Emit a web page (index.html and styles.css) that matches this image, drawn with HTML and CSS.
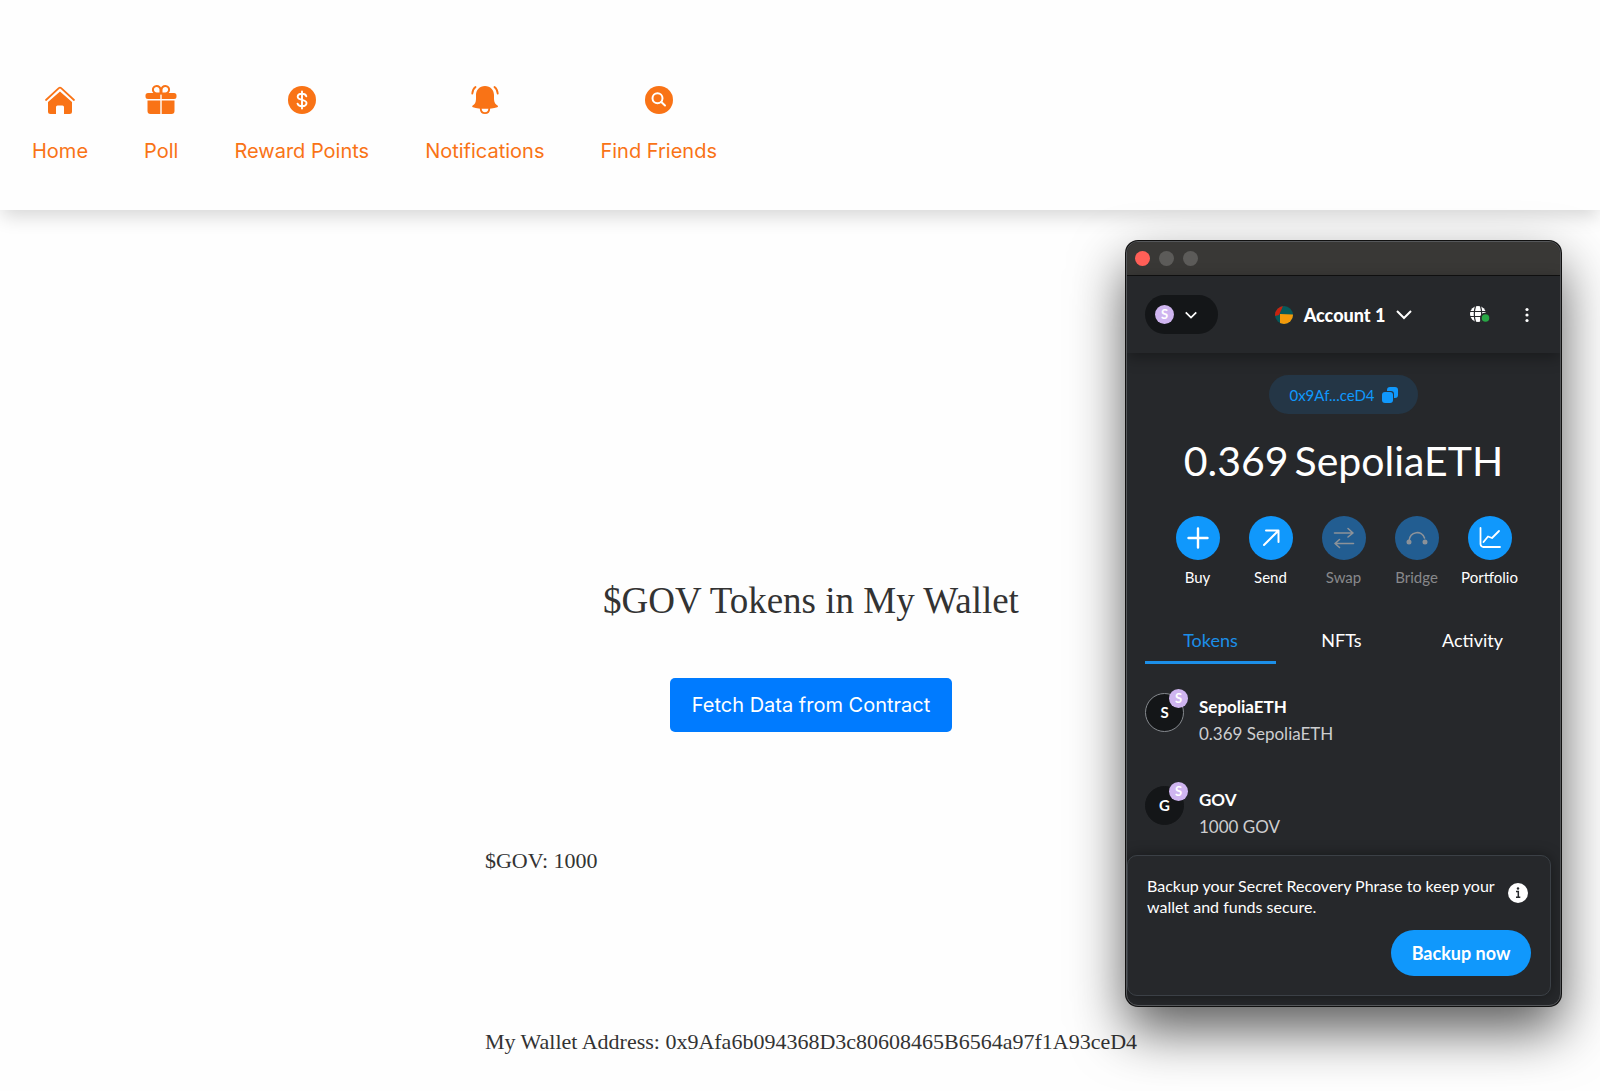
FILE: index.html
```html
<!DOCTYPE html>
<html lang="en">

<head>
    <meta charset="UTF-8">
    <meta name="viewport" content="width=device-width, initial-scale=1.0">
    <title>My Wallet</title>

    <link rel="stylesheet" href="styles.css">
</head>

<body>
    <header class="site-header">
        <nav class="nav">
            <a href="#home">
                <svg viewBox="0 0 32 32" fill="none" stroke="currentColor">
                    <path d="M2 16 14.800 4.200a1.800 1.800 0 0 1 2.400 0L30 16" stroke-width="1.800" stroke-linecap="round" />
                    <path d="M16 7.500 28 18v9.500a2.500 2.500 0 0 1-2.500 2.500H20v-7a1.500 1.500 0 0 0-1.500-1.500h-5A1.500 1.500 0 0 0 12 23v7H6.500A2.500 2.500 0 0 1 4 27.500V18z" fill="currentColor" stroke="none" />
                </svg>
                <span>Home</span>
            </a>
            <a href="#poll">
                <svg viewBox="0 0 32 32" fill="currentColor">
                    <g fill="none" stroke="currentColor" stroke-width="2">
                        <path d="M15.500 9.500H12a3.800 3.800 0 1 1 3.500-3.800z" />
                        <path d="M16.500 9.500H20a3.800 3.800 0 1 0-3.500-3.800z" />
                    </g>
                    <path d="M3 9h12.300v6H3a2.500 2.500 0 0 1-2.500-2.500v-1A2.500 2.500 0 0 1 3 9zM16.700 9H29a2.500 2.500 0 0 1 2.500 2.500v1A2.500 2.500 0 0 1 29 15H16.700zM2.500 16.500h12.800V30H5.500a3 3 0 0 1-3-3zM16.700 16.500h12.800V27a3 3 0 0 1-3 3h-9.800z" />
                </svg>
                <span>Poll</span>
            </a>
            <a href="#rewards">
                <svg viewBox="0 0 32 32" fill="none" stroke="#fff" stroke-width="1.900" stroke-linecap="round">
                    <circle cx="16" cy="16" r="14" fill="#f97316" stroke="none" />
                    <path d="M20.300 12.300c-.5-1.700-2.200-2.500-4.300-2.500-2.500 0-4.300 1.100-4.300 3 0 4.200 8.800 2 8.800 6.300 0 2-1.900 3.200-4.500 3.200-2.300 0-4-.9-4.500-2.700M16 7.500v17" />
                </svg>
                <span>Reward Points</span>
            </a>
            <a href="#notifications">
                <svg viewBox="0 0 32 32" fill="currentColor">
                    <path d="M16 2c5.500 0 9 4 9 9v4c0 3.500 1.500 5.500 3.500 6.500.8.500.6 1.500-.3 1.800C21 25.300 11 25.300 4 23.300c-.9-.3-1.100-1.300-.3-1.800C5.700 20.500 7 18.500 7 15v-4c0-5 3.500-9 9-9z" />
                    <path d="M11.700 24.500c.3 6.200 8.300 6.200 8.600 0M6.500 3C4.500 4.500 3.500 7 3.300 9.500M25.500 3c2 1.500 3 4 3.200 6.500" fill="none" stroke="currentColor" stroke-width="1.900" stroke-linecap="round" />
                </svg>
                <span>Notifications</span>
            </a>
            <a href="#friends">
                <svg viewBox="0 0 32 32" fill="none" stroke="#fff" stroke-width="2" stroke-linecap="round">
                    <circle cx="16" cy="16" r="14" fill="#f97316" stroke="none" />
                    <circle cx="14.500" cy="14.300" r="5" />
                    <path d="m18.300 18 3.700 3.500" />
                </svg>
                <span>Find Friends</span>
            </a>
        </nav>
    </header>

    <main class="container">
        <h1>$GOV Tokens in My Wallet</h1>
        <button type="button" class="fetch-btn">Fetch Data from Contract</button>
        <div class="results">
            <p>$GOV: 1000</p>
            <p>My Wallet Address: 0x9Afa6b094368D3c80608465B6564a97f1A93ceD4</p>
        </div>
    </main>

    <section class="wallet" aria-label="Wallet">
        <div class="titlebar">
            <span class="dot dot-close"></span>
            <span class="dot"></span>
            <span class="dot"></span>
        </div>

        <div class="wallet-header">
            <button type="button" class="network" aria-label="Network">
                <span class="net-badge">S</span>
                <svg class="chevron" viewBox="0 0 16 16"><path d="m2 5 6 6 6-6" /></svg>
            </button>
            <button type="button" class="account">
                <svg class="jazzicon" viewBox="0 0 18 18">
                    <defs><clipPath id="round"><circle cx="9" cy="9" r="9" /></clipPath></defs>
                    <g clip-path="url(#round)">
                        <path d="M0 0h18v18H0z" fill="#07595a" />
                        <path d="M0 0h8L4 9 0 10z" fill="#c8220f" />
                        <path d="m5 8 13 .5V18H5z" fill="#f39a0b" />
                    </g>
                </svg>
                Account 1
                <svg class="chevron" viewBox="0 0 16 16"><path d="m1 4 7 7 7-7" /></svg>
            </button>
            <div class="header-icons">
                <button type="button" aria-label="Connected sites">
                    <svg class="globe" viewBox="0 0 20 18">
                        <circle cx="8" cy="8" r="8" fill="#fff" />
                        <path d="M0 5.500h16M0 10.500h16M5.500 0C4 5 4 11 5.500 16M10.500 0c1.500 5 1.500 11 0 16" fill="none" stroke="#26282b" stroke-width="1.200" />
                        <circle cx="15.500" cy="12" r="5.500" fill="#26282b" />
                        <circle cx="15.500" cy="12" r="3.800" fill="#28a745" />
                    </svg>
                </button>
                <button type="button" aria-label="Account options">
                    <svg class="kebab" viewBox="0 0 4 16" fill="#fff">
                        <circle cx="2" cy="2.500" r="1.600" />
                        <circle cx="2" cy="8" r="1.600" />
                        <circle cx="2" cy="13.500" r="1.600" />
                    </svg>
                </button>
            </div>
        </div>

        <div class="wallet-body">
            <button type="button" class="address">
                0x9Af...ceD4
                <svg viewBox="0 0 16 16" fill="#1098fc">
                    <path d="M8 0h5a3 3 0 0 1 3 3v5a3 3 0 0 1-3 3h-1V7a3 3 0 0 0-3-3H5V3a3 3 0 0 1 3-3z" />
                    <rect y="5" width="11" height="11" rx="3" />
                </svg>
            </button>

            <div class="balance">
                <span>0.369</span>
                <span>SepoliaETH</span>
            </div>

            <div class="actions">
                <button type="button">
                    <svg viewBox="0 0 44 44"><path d="M22 12.500v19M12.500 22h19" stroke-width="2.400" /></svg>
                    Buy
                </button>
                <button type="button">
                    <svg viewBox="0 0 44 44"><path d="m15 29 14-14M17 14.500h12.500V26" /></svg>
                    Send
                </button>
                <button type="button" disabled>
                    <svg viewBox="0 0 44 44"><path d="M12.500 17H31m-5-4.500 5 4.500-5 4M31.500 27.500H13m4.500-4-4.500 4 4.500 4" stroke-width="1.600" /></svg>
                    Swap
                </button>
                <button type="button" disabled>
                    <svg viewBox="0 0 44 44">
                        <path d="M14 25c1-10 13-11 15.500-3" stroke-width="1.600" />
                        <circle cx="14" cy="26" r="1.500" />
                        <circle cx="30" cy="26" r="1.500" />
                    </svg>
                    Bridge
                </button>
                <button type="button">
                    <svg viewBox="0 0 44 44"><path d="M12.500 12v16a3 3 0 0 0 3 3H32M15.500 26l4.500-5.500 4 1.500 7-7" stroke-width="1.800" /></svg>
                    Portfolio
                </button>
            </div>

            <div class="tabs">
                <button type="button" class="active">Tokens</button>
                <button type="button">NFTs</button>
                <button type="button">Activity</button>
            </div>

            <ul class="tokens">
                <li>
                    <div class="avatar outlined">S<span class="net-badge">S</span></div>
                    <div>
                        <p class="token-name">SepoliaETH</p>
                        <p class="token-amount">0.369 SepoliaETH</p>
                    </div>
                </li>
                <li>
                    <div class="avatar">G<span class="net-badge">S</span></div>
                    <div>
                        <p class="token-name">GOV</p>
                        <p class="token-amount">1000 GOV</p>
                    </div>
                </li>
            </ul>
        </div>

        <div class="backup">
            <div class="backup-text">
                <p>Backup your Secret Recovery Phrase to keep your wallet and funds secure.</p>
                <svg viewBox="0 0 20 20">
                    <circle cx="10" cy="10" r="10" fill="#fff" />
                    <path d="M8 8.500h2.300V14M8 14.200h4.300" fill="none" stroke="#26282b" stroke-width="1.500" />
                    <circle cx="10" cy="5.500" r="1.200" fill="#26282b" />
                </svg>
            </div>
            <button type="button" class="backup-btn">Backup now</button>
        </div>
    </section>
</body>

</html>
```

FILE: styles.css
```css
* {
    box-sizing: border-box;
}

body {
    margin: 0;
    min-height: 100vh;
    background-color: #fefefe;
    color: #333;
    font-family: "Liberation Serif", "Times New Roman", serif;
    overflow-x: hidden;
}

h1,
p,
ul {
    margin: 0;
    padding: 0;
}

button {
    padding: 0;
    border: none;
    background: none;
    color: inherit;
    font: inherit;
    cursor: pointer;
}

/* top navigation */
.site-header {
    padding: 84px 32px 45px;
    background-color: #fefefe;
    box-shadow: 0 8px 18px -2px rgba(0, 0, 0, 0.16);
}

.nav {
    display: flex;
    gap: 56px;
}

.nav a {
    display: flex;
    flex-direction: column;
    align-items: center;
    gap: 21px;
    color: #f97316;
    font-family: Inter, sans-serif;
    font-size: 20px;
    line-height: 28px;
    text-decoration: none;
}

.nav svg {
    width: 32px;
    height: 32px;
}

/* contract data */
.container {
    display: flex;
    flex-direction: column;
    align-items: center;
    padding: 366px 0 32px 22px;
}

h1 {
    font-size: 37px;
    font-weight: normal;
    line-height: 50px;
}

.fetch-btn {
    margin-top: 52px;
    padding: 12px 22px;
    border-radius: 5px;
    background-color: #007bff;
    color: #fff;
    font-family: Inter, sans-serif;
    font-size: 20px;
    line-height: 30px;
}

.results {
    display: flex;
    flex-direction: column;
    gap: 153px;
    margin-top: 115px;
    font-size: 22px;
    line-height: 28px;
}

/* wallet window floating over the page */
.wallet {
    position: absolute;
    top: 241px;
    right: 39px;
    width: 435px;
    border: 1px solid #55575a;
    border-radius: 12px;
    background-color: #26282b;
    box-shadow: 0 0 0 1px #111, 0 24px 54px rgba(0, 0, 0, 0.65);
    color: #fff;
    font-family: Lato, sans-serif;
    overflow: hidden;
}

.titlebar {
    display: flex;
    align-items: center;
    gap: 9px;
    height: 34px;
    padding-left: 8px;
    border-bottom: 1px solid #111;
    background-color: #393836;
}

.dot {
    width: 15px;
    height: 15px;
    border-radius: 50%;
    background-color: #5c5b59;
}

.dot-close {
    background-color: #ff5f57;
}

.wallet-header {
    display: grid;
    grid-template-columns: 1fr auto 1fr;
    align-items: center;
    height: 77px;
    padding: 0 18px;
    box-shadow: 0 4px 14px rgba(0, 0, 0, 0.35);
}

.network {
    display: flex;
    align-items: center;
    gap: 10px;
    width: 73px;
    height: 39px;
    padding-left: 10px;
    border-radius: 20px;
    background-color: #141618;
}

.net-badge {
    display: flex;
    align-items: center;
    justify-content: center;
    width: 19px;
    height: 19px;
    border-radius: 50%;
    background-color: #cfb5f0;
    color: #fff;
    font-size: 13px;
    font-weight: bold;
    line-height: 19px;
}

.chevron {
    width: 14px;
    height: 14px;
    fill: none;
    stroke: #fff;
    stroke-width: 2;
}

.account {
    display: flex;
    align-items: center;
    gap: 11px;
    font-size: 18px;
    font-weight: 900;
}

.account .chevron {
    width: 16px;
    height: 16px;
}

.jazzicon {
    width: 18px;
    height: 18px;
}

.header-icons {
    display: flex;
    align-items: center;
    justify-content: flex-end;
    gap: 35px;
    padding-right: 13px;
}

.header-icons svg {
    display: block;
}

.globe {
    width: 20px;
    height: 18px;
}

.kebab {
    width: 4px;
    height: 16px;
}

.wallet-body {
    display: flex;
    flex-direction: column;
    align-items: center;
    padding: 22px 18px 0;
}

.address {
    display: flex;
    align-items: center;
    gap: 7px;
    height: 39px;
    padding: 0 20px;
    border-radius: 20px;
    background-color: #243646;
    color: #1098fc;
    font-size: 15px;
}

.address svg {
    width: 16px;
    height: 16px;
}

.balance {
    display: flex;
    gap: 6px;
    margin-top: 22px;
    font-size: 41px;
    line-height: 50px;
}

.actions {
    display: flex;
    margin-top: 30px;
}

.actions button {
    display: flex;
    flex-direction: column;
    align-items: center;
    gap: 7px;
    width: 73px;
    font-size: 15px;
    line-height: 20px;
}

.actions svg {
    width: 44px;
    height: 44px;
    border-radius: 50%;
    background-color: #1098fc;
    fill: none;
    stroke: #fff;
    stroke-width: 2;
    stroke-linecap: round;
    stroke-linejoin: round;
}

.actions button:disabled {
    color: #88898b;
    cursor: default;
}

.actions button:disabled svg {
    background-color: #225d91;
    stroke: #8c9299;
}

.actions circle {
    fill: #8c9299;
}

.tabs {
    display: flex;
    align-self: stretch;
    margin: 36px 4px 0 0;
}

.tabs button {
    flex: 1;
    height: 41px;
    padding-bottom: 4px;
    border-bottom: 3px solid transparent;
    font-size: 18px;
}

.tabs .active {
    border-color: #1c8fe8;
    color: #1c8fe8;
}

.tokens {
    align-self: stretch;
    list-style: none;
}

.tokens li {
    display: flex;
    gap: 15px;
    height: 93px;
    padding-top: 29px;
    line-height: 27px;
}

.avatar {
    position: relative;
    width: 39px;
    height: 39px;
    border: 1px solid #141618;
    border-radius: 50%;
    background-color: #141618;
    font-size: 15px;
    font-weight: bold;
    line-height: 37px;
    text-align: center;
}

.outlined {
    border-color: #85898e;
}

.avatar .net-badge {
    position: absolute;
    top: -5px;
    right: -5px;
}

.token-name {
    font-size: 17px;
    font-weight: bold;
}

.token-amount {
    color: #cdced0;
    font-size: 17px;
}

.backup {
    display: flex;
    flex-direction: column;
    gap: 13px;
    margin: 5px 9px 9px 0;
    padding: 19px;
    border: 1px solid #3b4046;
    border-radius: 10px;
    box-shadow: 0 0 14px rgba(0, 0, 0, 0.4);
}

.backup-text {
    display: flex;
    justify-content: space-between;
    gap: 12px;
    padding-right: 3px;
    font-size: 16px;
    line-height: 21px;
}

.backup-text svg {
    flex: none;
    width: 20px;
    height: 20px;
    margin-top: 8px;
}

.backup-btn {
    align-self: flex-end;
    width: 140px;
    height: 46px;
    border-radius: 23px;
    background-color: #1098fc;
    font-size: 18px;
    font-weight: bold;
}
```
